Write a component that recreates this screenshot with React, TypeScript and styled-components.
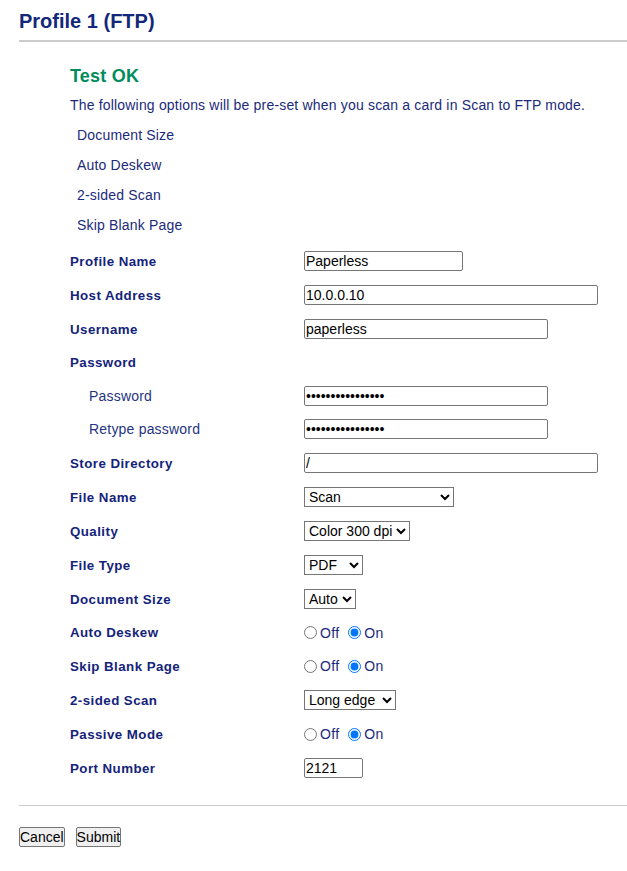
import { FC, ReactNode } from "react";
import { createGlobalStyle, styled } from "styled-components";

const GlobalStyle = createGlobalStyle`
  body {
    margin: 0;
    background: #fff;
    font-family: "Liberation Sans", Arial, sans-serif;
    color: #1b2a7b;
  }
`;

interface FieldRow {
  label: string;
  sub?: boolean;
  height?: number;
  control?: ReactNode;
}

const presets = ["Document Size", "Auto Deskew", "2-sided Scan", "Skip Blank Page"];

const OnOff: FC<{ name: string }> = ({ name }) => (
  <Radios>
    <RadioLabel>
      <Radio type="radio" name={name} value="off" />
      Off
    </RadioLabel>
    <RadioLabel>
      <Radio type="radio" name={name} value="on" defaultChecked />
      On
    </RadioLabel>
  </Radios>
);

// built at render time so the styled components below exist
const buildRows = (): FieldRow[] => [
  { label: "Profile Name", control: <TextInput $width={159} defaultValue="Paperless" /> },
  { label: "Host Address", control: <TextInput $width={294} defaultValue="10.0.0.10" /> },
  { label: "Username", control: <TextInput $width={244} defaultValue="paperless" /> },
  { label: "Password", height: 33 },
  {
    label: "Password",
    sub: true,
    height: 33,
    control: <TextInput type="password" $width={244} defaultValue="0123456789abcdef" />,
  },
  {
    label: "Retype password",
    sub: true,
    control: <TextInput type="password" $width={244} defaultValue="0123456789abcdef" />,
  },
  { label: "Store Directory", control: <TextInput $width={294} defaultValue="/" /> },
  {
    label: "File Name",
    control: (
      <Select $width={150} defaultValue="Scan">
        <option>Scan</option>
      </Select>
    ),
  },
  {
    label: "Quality",
    control: (
      <Select $width={106} defaultValue="Color 300 dpi">
        <option>Color 300 dpi</option>
      </Select>
    ),
  },
  {
    label: "File Type",
    control: (
      <Select $width={59} defaultValue="PDF">
        <option>PDF</option>
      </Select>
    ),
  },
  {
    label: "Document Size",
    control: (
      <Select $width={52} defaultValue="Auto">
        <option>Auto</option>
      </Select>
    ),
  },
  { label: "Auto Deskew", height: 33, control: <OnOff name="deskew" /> },
  { label: "Skip Blank Page", control: <OnOff name="skipblank" /> },
  {
    label: "2-sided Scan",
    control: (
      <Select $width={92} defaultValue="Long edge">
        <option>Long edge</option>
      </Select>
    ),
  },
  { label: "Passive Mode", control: <OnOff name="passive" /> },
  { label: "Port Number", control: <TextInput $width={59} defaultValue="2121" /> },
];

export default function App() {
  const rows = buildRows();
  return (
    <Page>
      <GlobalStyle />
      <Title>Profile 1 (FTP)</Title>
      <Content>
        <Status>Test OK</Status>
        <Description>
          The following options will be pre-set when you scan a card in Scan to FTP mode.
        </Description>
        <PresetList>
          {presets.map((p) => (
            <Preset key={p}>{p}</Preset>
          ))}
        </PresetList>
        <Form>
          {rows.map((row, i) => (
            <Row key={i} $height={row.height ?? 34}>
              <Label $sub={row.sub}>{row.label}</Label>
              <Control>{row.control}</Control>
            </Row>
          ))}
        </Form>
      </Content>
      <Divider />
      <Buttons>
        <Button type="button">Cancel</Button>
        <Button type="button">Submit</Button>
      </Buttons>
    </Page>
  );
}

const Page = styled.div`
  padding: 9px 0 30px 19px;
`;
const Title = styled.h1`
  margin: 0;
  padding-bottom: 7px;
  font-size: 20px;
  line-height: 24px;
  font-weight: bold;
  color: #13287a;
  border-bottom: 2px solid #cccccc;
`;
const Content = styled.div`
  margin-left: 51px;
`;
const Status = styled.h2`
  margin: 23px 0 0;
  font-size: 18px;
  line-height: 22px;
  font-weight: bold;
  letter-spacing: 0.2px;
  color: #008c5c;
`;
const Description = styled.p`
  margin: 8px 0 0;
  font-size: 14px;
  line-height: 20px;
  letter-spacing: 0.18px;
  color: #1b2a7b;
`;
const PresetList = styled.div`
  margin-top: 5px;
  display: flex;
  flex-direction: column;
`;
const Preset = styled.div`
  padding-left: 7px;
  font-size: 14px;
  line-height: 30px;
  letter-spacing: 0.18px;
  color: #1b2a7b;
`;
const Form = styled.div`
  margin-top: 4px;
  display: flex;
  flex-direction: column;
`;
const Row = styled.div<{ $height: number }>`
  display: grid;
  grid-template-columns: 234px 1fr;
  align-items: center;
  height: ${(p) => p.$height}px;
`;
const Label = styled.div<{ $sub?: boolean }>`
  padding-left: ${(p) => (p.$sub ? "19px" : "0")};
  font-size: ${(p) => (p.$sub ? "14px" : "13.3px")};
  font-weight: ${(p) => (p.$sub ? "normal" : "bold")};
  letter-spacing: ${(p) => (p.$sub ? "0.2px" : "0.45px")};
  color: ${(p) => (p.$sub ? "#24347f" : "#14237a")};
`;
const Control = styled.div`
  display: flex;
  align-items: center;
`;
const TextInput = styled.input<{ $width: number }>`
  box-sizing: border-box;
  width: ${(p) => p.$width}px;
  height: 20px;
  padding: 1px 1px;
  border: 1px solid #767676;
  border-radius: 2px;
  font-family: "Liberation Sans", Arial, sans-serif;
  font-size: 14px;
  color: #000;
  background: #fff;
`;
const Select = styled.select<{ $width: number }>`
  box-sizing: border-box;
  width: ${(p) => p.$width}px;
  height: 20px;
  padding: 0;
  border: 1px solid #767676;
  border-radius: 0;
  font-family: "Liberation Sans", Arial, sans-serif;
  font-size: 14px;
  color: #000;
  background: #fff;
`;
const Radios = styled.div`
  display: flex;
  align-items: center;
  gap: 9px;
`;
const RadioLabel = styled.label`
  display: flex;
  align-items: center;
  font-size: 14px;
  letter-spacing: 0.3px;
  color: #1b2a7b;
`;
const Radio = styled.input`
  margin: 0 3px 0 0;
  width: 13px;
  height: 13px;
`;
const Divider = styled.hr`
  margin: 20px 0 0;
  border: 0;
  border-top: 1px solid #cccccc;
`;
const Buttons = styled.div`
  margin-top: 21px;
  display: flex;
  gap: 11px;
`;
const Button = styled.button`
  padding: 1px 0;
  font-family: "Liberation Sans", Arial, sans-serif;
  font-size: 14px;
  color: #000;
  background: #efefef;
  border: 1px solid #767676;
  border-radius: 2px;
`;
